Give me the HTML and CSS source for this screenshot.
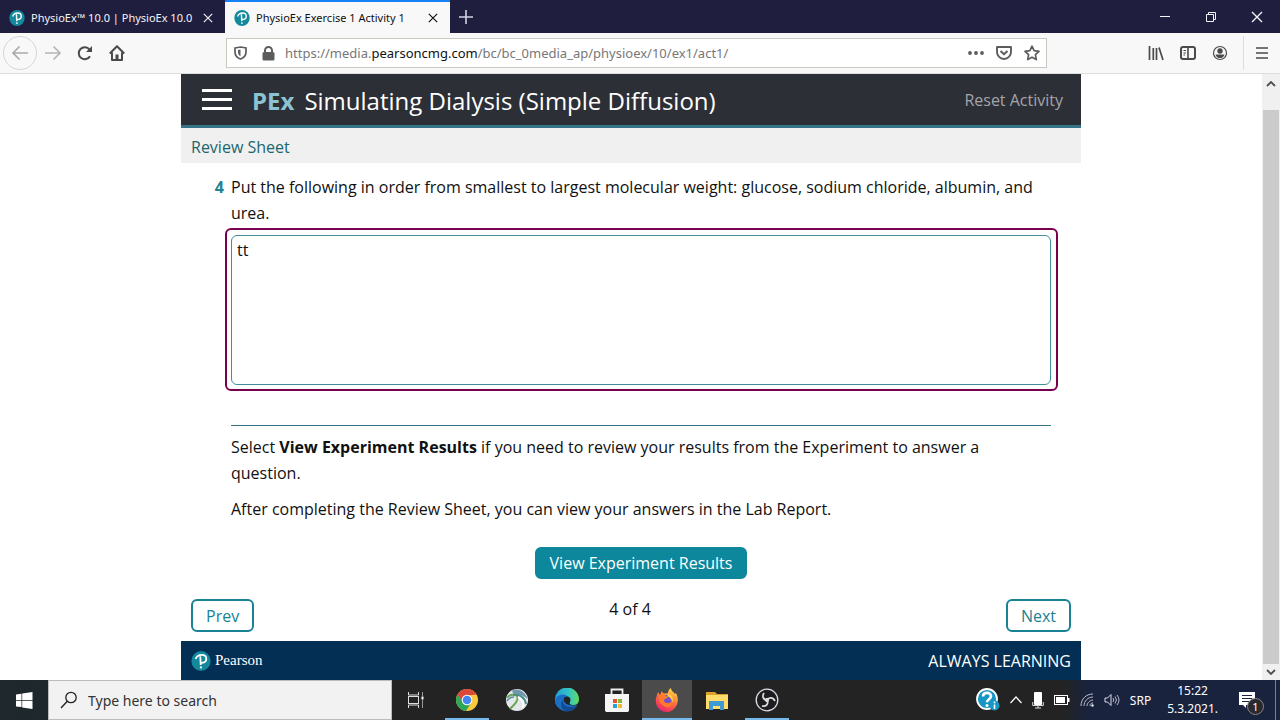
FILE: index.html
```
<!DOCTYPE html>
<html lang="en">
<head>
<meta charset="UTF-8">
<meta name="viewport" content="width=device-width, initial-scale=1.0">
<title>PhysioEx Exercise 1 Activity 1</title>
<link rel="stylesheet" href="styles.css">
</head>
<body>
<svg class="defs" aria-hidden="true">
  <symbol id="pearson" viewBox="0 0 20 20">
    <ellipse cx="10" cy="10" rx="9.6" ry="10" fill="#14889c"/>
    <path d="M4.6 8C5.5 5.400 8 3.800 10.600 3.800c2.800 0 4.700 1.600 4.700 3.900 0 2.600-2.300 4.200-5.300 4.200M9.300 5.300l.4 8.700" fill="none" stroke="#fff" stroke-width="1.800"/>
    <circle cx="9.900" cy="16.400" r="1.100" fill="#fff"/>
  </symbol>
  <symbol id="cross" viewBox="0 0 12 12"><path d="M1 1l10 10M11 1L1 11" fill="none" stroke="currentColor" stroke-width="1.400"/></symbol>
</svg>

<header class="tabs">
  <div class="tab">
    <svg class="favicon"><use href="#pearson"/></svg>
    <span class="tab-title">PhysioEx™ 10.0 | PhysioEx 10.0</span>
    <button class="close" aria-label="Close tab"><svg width="10" height="10"><use href="#cross"/></svg></button>
  </div>
  <div class="tab active">
    <svg class="favicon"><use href="#pearson"/></svg>
    <span class="tab-title">PhysioEx Exercise 1 Activity 1</span>
    <button class="close" aria-label="Close tab"><svg width="10" height="10"><use href="#cross"/></svg></button>
  </div>
  <button class="new-tab" aria-label="New tab"><svg width="14" height="14" viewBox="0 0 14 14"><path d="M7 0v14M0 7h14" stroke="currentColor" stroke-width="1.600"/></svg></button>
  <div class="window-buttons">
    <button aria-label="Minimize"><svg width="12" height="12" viewBox="0 0 12 12"><path d="M1 5.500h10" stroke="currentColor"/></svg></button>
    <button aria-label="Restore"><svg width="12" height="12" viewBox="0 0 12 12"><path d="M1.500 3.500h7v7h-7zM3.500 3.500v-2h7v7h-2" fill="none" stroke="currentColor"/></svg></button>
    <button aria-label="Close window"><svg width="12" height="12"><use href="#cross"/></svg></button>
  </div>
</header>

<nav class="toolbar">
  <div class="nav-buttons">
    <button class="back" aria-label="Back"><svg width="18" height="16" viewBox="0 0 18 16"><path d="M17 8H2M8.500 1.500L2 8l6.500 6.500" fill="none" stroke="currentColor" stroke-width="1.700"/></svg></button>
    <button class="forward" aria-label="Forward"><svg width="18" height="16" viewBox="0 0 18 16"><path d="M1 8h15M9.500 1.500L16 8l-6.500 6.500" fill="none" stroke="currentColor" stroke-width="1.700"/></svg></button>
    <button aria-label="Reload"><svg width="16" height="16" viewBox="0 0 16 16"><path d="M13 11.200A6 6 0 1 1 12.500 4.500" fill="none" stroke="currentColor" stroke-width="2"/><path d="M15 1v6H9z" fill="currentColor"/></svg></button>
    <button aria-label="Home"><svg width="16" height="16" viewBox="0 0 16 16"><path d="M.8 8.500L8 1.300l7.200 7.200M3 7.500V15h10V7.500" fill="none" stroke="currentColor" stroke-width="2" stroke-linejoin="round"/><path d="M6.500 15V9.500h3V15" fill="currentColor"/></svg></button>
  </div>
  <div class="address">
    <svg width="13" height="14" viewBox="0 0 13 14"><path d="M1 2l5.500-1L12 2v4c0 3.500-2 5.700-5.500 7C3 11.700 1 9.500 1 6z" fill="none" stroke="currentColor" stroke-width="1.700"/><path d="M6.500 3.600L4 4v2c0 2 .8 3.300 2.500 4.300z" fill="currentColor"/></svg>
    <svg class="lock" width="13" height="15" viewBox="0 0 13 15"><rect x=".5" y="6" width="12" height="8.500" rx="1.500" fill="currentColor"/><path d="M3 7V4.500a3.500 3.500 0 0 1 7 0V7" fill="none" stroke="currentColor" stroke-width="2"/></svg>
    <span class="url">https://media.<b>pearsoncmg.com</b>/bc/bc_0media_ap/physioex/10/ex1/act1/</span>
    <svg width="16" height="16" viewBox="0 0 16 16" fill="currentColor"><circle cx="2" cy="8" r="1.900"/><circle cx="8" cy="8" r="1.900"/><circle cx="14" cy="8" r="1.900"/></svg>
    <svg width="16" height="16" viewBox="0 0 16 16" fill="none" stroke="currentColor" stroke-width="1.900"><path d="M1 2h14v5a7 7 0 0 1-14 0z" stroke-linejoin="round"/><path d="M4.500 6L8 9.300 11.500 6"/></svg>
    <svg width="16" height="16" viewBox="0 0 16 16"><path d="M8 1.200l2.100 4.500 4.900.6-3.600 3.400.9 4.900L8 12.200l-4.300 2.400.9-4.900L1 6.300l4.900-.6z" fill="none" stroke="currentColor" stroke-width="1.700" stroke-linejoin="round"/></svg>
  </div>
  <div class="tools">
    <button aria-label="Library"><svg width="16" height="16" viewBox="0 0 16 16"><path d="M1.500 1v14M5.300 3v12M8.500 3v12M11 2.500L15 15" stroke="currentColor" stroke-width="1.700"/></svg></button>
    <button aria-label="Sidebar"><svg width="16" height="16" viewBox="0 0 16 16" fill="none" stroke="currentColor"><rect x="1" y="2" width="14" height="12" rx="2" stroke-width="2"/><path d="M8 2v12" stroke-width="1.600"/><path d="M3.500 5.500H6M3.500 8H6M3.500 10H5"/></svg></button>
    <button aria-label="Account"><svg width="16" height="16" viewBox="0 0 16 16"><circle cx="8" cy="8" r="6.500" fill="none" stroke="currentColor" stroke-width="1.200"/><circle cx="8" cy="6" r="2.700" fill="currentColor"/><path d="M3.500 9.500h9c-.5 2.500-2.500 3.600-4.500 3.600S4 12 3.500 9.500z" fill="currentColor"/></svg></button>
    <button class="menu" aria-label="Menu"><svg width="12" height="14" viewBox="0 0 12 14"><path d="M0 2h12M0 7h12M0 12h12" stroke="currentColor" stroke-width="1.700"/></svg></button>
  </div>
</nav>

<div class="viewport">
  <main class="page">
    <header class="page-header">
      <button class="burger" aria-label="Open menu"><span></span><span></span><span></span></button>
      <strong class="brand">PEx</strong>
      <h1>Simulating Dialysis (Simple Diffusion)</h1>
      <a class="reset" href="#">Reset Activity</a>
    </header>
    <h2 class="section-title">Review Sheet</h2>

    <section class="sheet">
      <label class="question" for="answer"><b class="number">4</b>Put the following in order from smallest to largest molecular weight: glucose, sodium chloride, albumin, and urea.</label>
      <div class="answer-frame">
        <textarea class="answer" id="answer">tt</textarea>
      </div>
      <div class="notes">
        <p>Select <b>View Experiment Results</b> if you need to review your results from the Experiment to answer a question.</p>
        <p>After completing the Review Sheet, you can view your answers in the Lab Report.</p>
      </div>
      <button class="btn primary">View Experiment Results</button>
    </section>

    <div class="pager">
      <button class="btn">Prev</button>
      <span class="count">4 of 4</span>
      <button class="btn">Next</button>
    </div>

    <footer class="page-footer">
      <svg class="logo"><use href="#pearson"/></svg>
      <span class="logo-name">Pearson</span>
      <span class="slogan">ALWAYS LEARNING</span>
    </footer>
  </main>
  <div class="scrollbar">
    <svg class="arrow" viewBox="0 0 10 6"><path d="M1 5l4-4 4 4" fill="none" stroke="#505050" stroke-width="1.800"/></svg>
    <div class="thumb"></div>
    <svg class="arrow" viewBox="0 0 10 6"><path d="M1 1l4 4 4-4" fill="none" stroke="#505050" stroke-width="1.800"/></svg>
  </div>
</div>

<footer class="taskbar">
  <button class="start" aria-label="Start"><svg width="17" height="17" viewBox="0 0 17 17" fill="#fff"><path d="M0 2.500L5.500 1.700V8H0zM6.200 1.500L16.500 0v8H6.200zM0 8.800h5.500v6.200L0 14.500zM6.200 8.800h10.300V17L6.200 15.500z"/></svg></button>
  <label class="search">
    <svg width="18" height="18" viewBox="0 0 18 18"><circle cx="11" cy="6.500" r="5.200" fill="none" stroke="#222" stroke-width="1.300"/><path d="M7.300 10.300L1 17" stroke="#222" stroke-width="1.400"/></svg>
    <input type="text" placeholder="Type here to search" aria-label="Type here to search">
  </label>
  <div class="apps">
    <button class="app" aria-label="Task view"><svg viewBox="0 0 24 24" fill="none" stroke="#ddd"><path d="M3.500 4v3h10V4M3.500 20v-3h10v3"/><rect x="3.500" y="8.500" width="10" height="7"/><path d="M17.500 4v4M17.500 12v8" stroke="#999"/><path d="M17.500 8.500v3" stroke="#fff" stroke-width="2"/></svg></button>
    <button class="app open" aria-label="Chrome"><svg viewBox="0 0 24 24"><circle cx="12" cy="12" r="11" fill="#f9cb3c"/><path d="M2.500 6.500A11 11 0 0 1 21.500 6.500L12 7.500 8 15z" fill="#d9483b"/><path d="M2.500 6.500A11 11 0 0 0 11 23l5-8-8-.5z" fill="#2fa45b"/><circle cx="12" cy="12" r="5.300" fill="#fff"/><circle cx="12" cy="12" r="4.300" fill="#4285f4"/></svg></button>
    <button class="app" aria-label="AnyConnect"><svg viewBox="0 0 24 24"><circle cx="12" cy="12" r="11" fill="#e3e9eb"/><path d="M7 2.500c6-3 14 2 15.500 8.500-3-3-8-5-14-4.500z" fill="#6f97ad"/><path d="M2 10c3-4 8-4 10-2 2 4-2 8-7 13" fill="none" stroke="#6aa556" stroke-width="2"/><path d="M8 7c7-1 12 3 13 9" fill="none" stroke="#4c8f87" stroke-width="2"/><path d="M13 9c4 2 6 6 5 11" fill="none" stroke="#fff" stroke-width="2"/><path d="M2 13c2-3 4-4 7-4" fill="none" stroke="#5688aa" stroke-width="1.500"/></svg></button>
    <button class="app" aria-label="Edge"><svg viewBox="0 0 24 24"><defs><linearGradient id="eg"><stop offset="0" stop-color="#229dd9"/><stop offset=".6" stop-color="#35c5c2"/><stop offset="1" stop-color="#65dc58"/></linearGradient></defs><path d="M0 12a12 12 0 0 1 24-1c0 5-3 6-6 6s-4-1-3-3c2-5-3-7-6-5S5 17 9 22c-5-1-9-5-9-10z" fill="url(#eg)"/><path d="M0 13C1 7 8 5 12 8c-6 1-4 12 10 9-4 7-12 8-17 4-3-2-5-5-5-8z" fill="#1a6fc4"/><path d="M9 11c-3 5 2 10 13 7-3 5-8 6-12 5-5-3-5-9-1-12z" fill="#124b91"/><path d="M12 9c-2 2-1 5 2 7-1-2 2-4-2-7z" fill="#242323"/></svg></button>
    <button class="app" aria-label="Store"><svg viewBox="0 0 24 24"><path d="M6.500 7V1.500h11V7" fill="none" stroke="#eee" stroke-width="1.800"/><path d="M0 6h24v16.500l-1 1.500H1l-1-1.500z" fill="#f5f5f5"/><path d="M8 11h4v4H8z" fill="#e2562f"/><path d="M13 11h4v4h-4z" fill="#84b83d"/><path d="M8 16h4v4H8z" fill="#27a2dc"/><path d="M13 16h4v4h-4z" fill="#f6b82c"/></svg></button>
    <button class="app open current" aria-label="Firefox"><svg viewBox="0 0 24 24"><defs><linearGradient id="ff" x1=".8" y1="0" x2=".3" y2="1"><stop offset="0" stop-color="#ffe34b"/><stop offset=".5" stop-color="#ff7139"/><stop offset="1" stop-color="#e9226f"/></linearGradient></defs><path d="M13 5c0-2 1-4 3-5 0 3 3 4 4 6l1-1c5 9-1 19-9 19S-2 16 2 7l1-3 2 3 2-4c0 2 2 3 6 2z" fill="url(#ff)"/><circle cx="12" cy="12.500" r="5.500" fill="#7650c9"/><path d="M5 7c4-1 6 1 8 2-1 2-4 1-4 4 1 3 6 3 8 0 1 5-4 8-8 5-4-2-6-6-4-11z" fill="#ff7a2a"/><path d="M14 6c4 2 5 6 3 9 0-4-2-6-5-7z" fill="#ffcf3c"/></svg></button>
    <button class="app" aria-label="File Explorer"><svg viewBox="0 0 24 24"><path d="M1 4h9l2 2h11v15H1z" fill="#dca32c"/><path d="M1 7h22v14H1z" fill="#ffdc6c"/><path d="M4 22v-9h15v9h-4v-4H8v4z" fill="#3e9ad5"/></svg></button>
    <button class="app open" aria-label="OBS"><svg viewBox="0 0 24 24" fill="none" stroke="#ddd"><circle cx="12" cy="12" r="10.800" fill="#1d1c20" stroke-width="1.300"/><path d="M12 12c-4 0-5-4-3-7M12 12c2-3 6-3 8 1M12 12c2 4-1 7-5 6" stroke-width="1.700"/><circle cx="12" cy="12" r="1.700" fill="#ddd"/></svg></button>
  </div>
  <div class="tray">
    <svg width="24" height="24" viewBox="0 0 24 24"><circle cx="11" cy="11" r="10" fill="#1796c4" stroke="#fff" stroke-width="1.800"/><path d="M7 8.500C7.200 3.500 15 4 15 8.300c0 3-4 2.800-4 6" fill="none" stroke="#fff" stroke-width="2.600"/><circle cx="11" cy="17.500" r="1.500" fill="#fff"/><circle cx="18.500" cy="17.500" r="5" fill="#1796c4"/><path d="M18.500 16.500V21M18.500 13.500v1.800" stroke="#fff" stroke-width="1.600"/></svg>
    <svg width="12" height="12" viewBox="0 0 12 12"><path d="M.5 9L6 3l5.500 6" fill="none" stroke="#fff" stroke-width="1.200"/></svg>
    <svg width="12" height="18" viewBox="0 0 12 18"><rect x="2" y="1" width="8" height="13" rx="1" fill="#fff"/><path d="M.7 11v3.500h10.600V11M6 14v3M3 17h6" fill="none" stroke="#ddd"/></svg>
    <svg width="16" height="12" viewBox="0 0 16 12"><rect x=".5" y="1.500" width="13" height="9" fill="none" stroke="#fff"/><path d="M2 3h9v6H2zM14 4h1.500v4H14z" fill="#fff"/></svg>
    <svg width="14" height="14" viewBox="0 0 14 14" fill="none" stroke="#bbc" stroke-width="1"><path d="M1 13C1 6 6 1 13 1M4 13c0-5 4-9 9-9M7 13c0-3 3-6 6-6M10 13c0-2 1-3 3-3"/><circle cx="12.500" cy="12.500" r="1" fill="#fff"/></svg>
    <svg width="16" height="14" viewBox="0 0 16 14" fill="none" stroke="#dde"><path d="M1 5h2.500L7 1.500v11L3.500 9H1z"/><path d="M9 5q1.500 2 0 4M11 3.500q3 3.500 0 7M13 2q4 5 0 10" opacity=".8"/></svg>
    <span class="lang">SRP</span>
    <time class="clock" datetime="2021-03-05T15:22"><span>15:22</span><span>5.3.2021.</span></time>
    <div class="notice">
      <svg width="18" height="18" viewBox="0 0 18 18"><path d="M1 1h16v13H8v3l-3-3H1z" fill="#fff"/><path d="M4 4.500h10M4 7.500h10M4 10.500h7" stroke="#19233d" stroke-width="1.200"/></svg>
      <span class="badge">1</span>
    </div>
    <span class="show-desktop"></span>
  </div>
</footer>
</body>
</html>
```

FILE: styles.css
```
* {box-sizing:border-box;}
body {
  margin:0;
  height:100vh;
  display:flex;
  flex-direction:column;
  overflow:hidden;
  background:#fff;
  color:#111;
  font-family:"Open Sans", "Noto Sans", sans-serif;
  font-size:16px;
}
button {padding:0; border:0; background:none; color:inherit; font:inherit; cursor:pointer;}
svg {flex:none; display:block;}
.defs {position:absolute; width:0; height:0;}

/* browser tabs */
.tabs {display:flex; flex:none; height:33px; background:#201e3e; color:#f4f4f8; font-family:"Noto Sans", sans-serif; font-size:11px;}
.tab {display:flex; align-items:center; width:225px; padding:2px 8px 0 9px;}
.tab.active {background:#f8f8f9; color:#111; border-top:2px solid #1482f5; padding-top:0;}
.favicon {width:16px; height:16px; margin-right:6px;}
.tab-title {flex:1; white-space:nowrap; overflow:hidden;}
.close {display:flex; justify-content:center; width:18px;}
.new-tab {display:flex; align-items:center; padding:0 9px; color:#d4d2e4;}
.window-buttons {display:flex; margin-left:auto;}
.window-buttons button {display:flex; align-items:center; justify-content:center; width:46px;}

/* toolbar */
.toolbar {display:flex; align-items:center; flex:none; height:41px; background:#f8f8f9; border-bottom:1px solid #ddd; color:#4a4a4a;}
.nav-buttons {display:flex; align-items:center; width:226px; padding-left:3px;}
.nav-buttons button {display:flex; align-items:center; justify-content:center; width:32px; height:34px;}
.nav-buttons .back {width:34px; border:1px solid #d5d5d5; border-radius:50%; color:#aaa;}
.nav-buttons .forward {color:#b5b5b5;}
.address {display:flex; align-items:center; gap:12px; flex:1; height:30px; padding:0 6px 0 7px; background:#fff; border:1px solid #c9c9c1; color:#5c5c5c;}
.lock {margin-left:3px;}
.url {flex:1; margin-left:-2px; color:#777; font-family:"Noto Sans", sans-serif; font-size:13px; white-space:nowrap; overflow:hidden;}
.url b {color:#111; font-weight:400;}
.tools {display:flex; width:233px; padding-left:93px;}
.tools button {display:flex; align-items:center; justify-content:center; width:32px; height:34px;}
.tools .menu {flex:1; margin-left:7px; border-left:1px solid #ddd;}

/* activity page */
.viewport {display:flex; flex:1; min-height:0;}
.page {display:flex; flex-direction:column; width:100%; max-width:900px; margin:0 auto;}
.page-header {display:flex; align-items:center; flex:none; height:54px; padding:0 18px 0 21px; background:#2d2f37; border-bottom:3px solid #357486; color:#fff;}
.burger {display:flex; flex-direction:column; gap:6px; width:30px; margin-right:20px;}
.burger span {height:3px; background:#fff;}
.brand {margin-right:10px; padding-top:2px; color:#8cc3d2; font-size:24px;}
h1 {margin:0; padding-top:2px; font-size:24px; font-weight:400;}
.reset {margin-left:auto; color:#a3a5aa; text-decoration:none;}
.section-title {margin:0; height:35px; padding:6px 10px; background:#f0f0f0; color:#1b666f; font-size:16px; line-height:26px; font-weight:400;}
.sheet {display:flex; flex-direction:column; padding:11px 30px 0 50px; line-height:26px;}
.question {display:block; position:relative;}
.number {position:absolute; right:100%; margin-right:7px; color:#238395;}
.answer-frame {margin:2px -7px 0 -6px; padding:5px 5px 4px 4px; border:2px solid #78004f; border-radius:6px;}
.answer {
  display:block;
  width:100%;
  height:150px;
  padding:1px 5px;
  border:1px solid #3f8f9b;
  border-radius:6px;
  outline:0;
  resize:none;
  color:#111;
  font:inherit;
}
.notes {margin-top:34px; padding-top:8px; border-top:1px solid #357486;}
.notes p {margin:0 0 10px;}
.btn {height:33px; padding:0 13px; border:2px solid #198295; border-radius:6px; color:#198295;}
.btn.primary {align-self:center; margin-top:15px; height:32px; border-color:#0c879c; background:#0c879c; color:#fff;}
.pager {display:flex; justify-content:space-between; padding:20px 10px 9px;}
.count {line-height:20px;}
.page-footer {display:flex; align-items:center; flex:1; padding:0 10px; background:#032f54; color:#fff;}
.logo {width:20px; height:22px; margin-right:4px;}
.logo-name {font-family:"Liberation Serif", serif; font-size:15px;}
.slogan {margin-left:auto;}

.scrollbar {display:flex; flex-direction:column; align-items:center; width:18px; padding:7px 0 5px; background:#f0f0f0;}
.arrow {width:10px; height:6px;}
.thumb {flex:1; width:16px; margin:23px 0 5px; background:#cbcbcb;}

/* windows taskbar */
.taskbar {display:flex; flex:none; height:40px; background:linear-gradient(90deg, #1e282d, #242323 30%, #242323 83%, #19233d 85%); color:#fff; font-family:"Noto Sans", sans-serif;}
.start {display:flex; align-items:center; justify-content:center; width:48px;}
.search {display:flex; align-items:center; gap:10px; width:344px; padding-left:11px; background:#f2f2f2; border:1px solid #bbb;}
.search input {flex:1; min-width:0; padding:0; border:0; background:none; font:14px "Noto Sans", sans-serif;}
.search input::placeholder {color:#333; opacity:1;}
.apps {display:flex;}
.app {display:flex; align-items:center; justify-content:center; width:50px; padding-top:2px; border-bottom:2px solid transparent;}
.app svg {width:24px; height:24px;}
.app.open {border-image:linear-gradient(90deg, transparent 10%, #76b9ed 10%, #76b9ed 90%, transparent 90%) 2;}
.app.current {background:#4b4b4b; border-image:none; border-color:#76b9ed;}
.tray {display:flex; align-items:center; gap:10px; margin-left:auto; font-size:12px;}
.clock {display:flex; flex-direction:column; align-items:center; margin:0 10px 0 6px; line-height:18px;}
.notice {position:relative; padding-right:9px;}
.badge {position:absolute; left:9px; top:7px; width:17px; height:17px; background:#29292e; border:1px solid #888; border-radius:50%; font-size:11px; line-height:15px; text-align:center;}
.show-desktop {align-self:stretch; width:5px; border-left:1px solid #7a8090;}
```
